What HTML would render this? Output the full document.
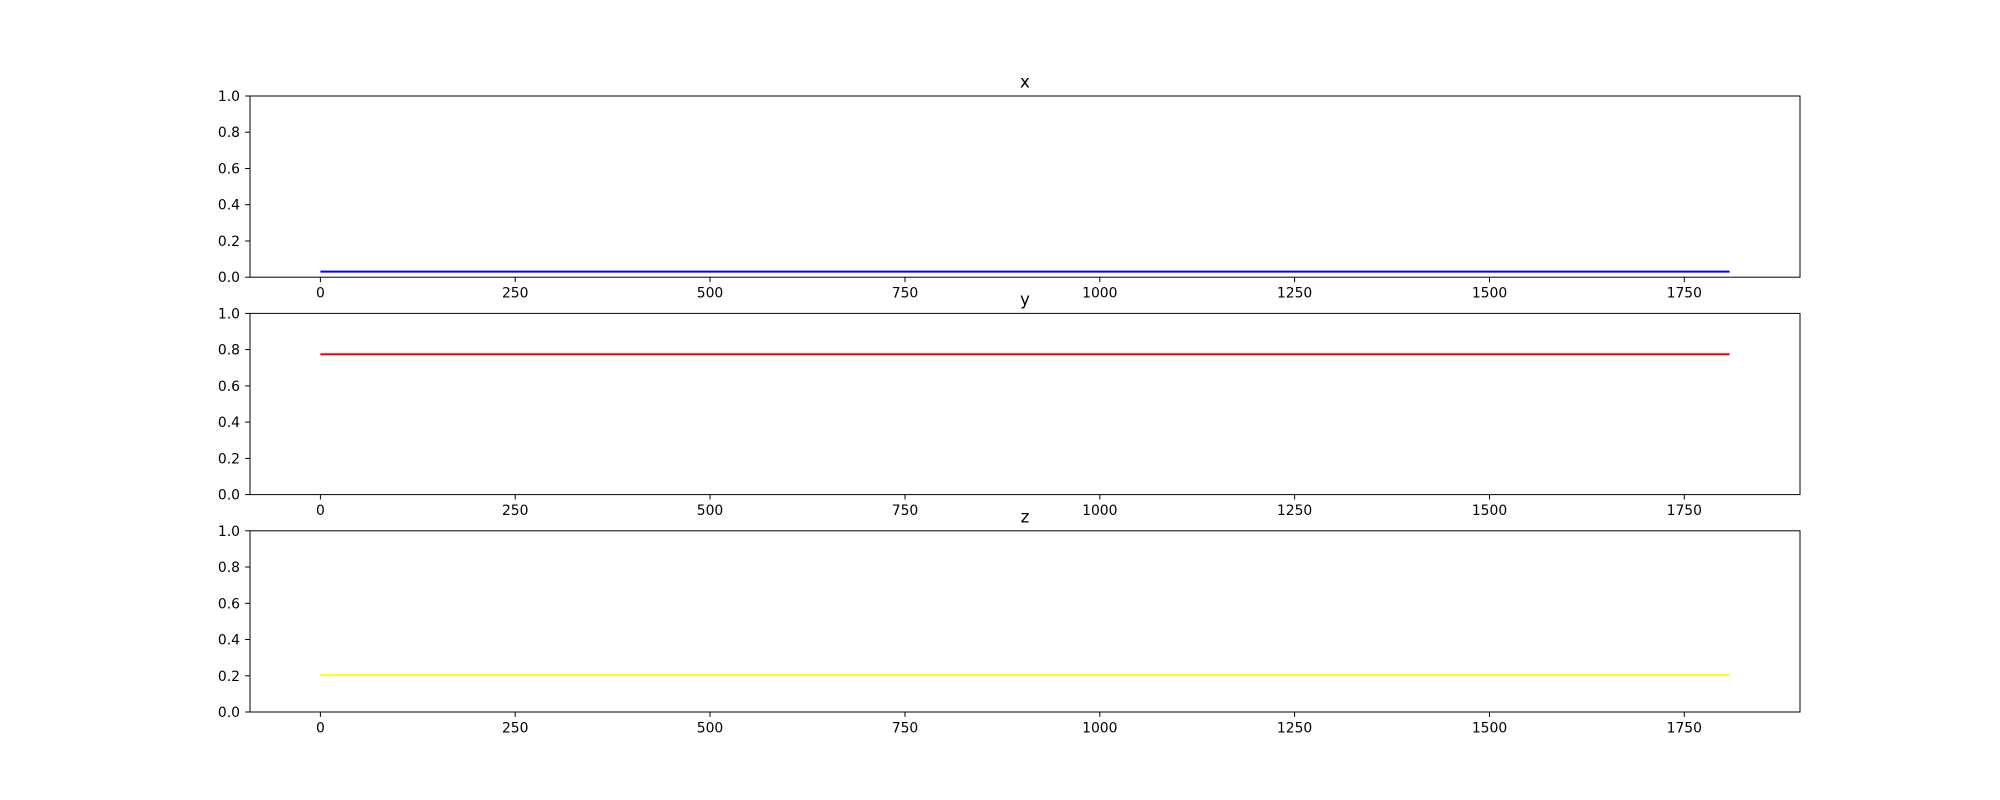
<!DOCTYPE html>
<html><head><style>html,body{margin:0;padding:0;background:#fff}svg{display:block}text{font-family:"DejaVu Sans","Liberation Sans",sans-serif;font-size:13.9px;fill:#000}</style></head>
<body>
<svg width="2000" height="800" xmlns="http://www.w3.org/2000/svg">
<defs>
<g id="xt" stroke="#000" stroke-width="1">
<line x1="320.4" y1="0" x2="320.4" y2="4.9"/><line x1="515.2" y1="0" x2="515.2" y2="4.9"/><line x1="710" y1="0" x2="710" y2="4.9"/><line x1="905" y1="0" x2="905" y2="4.9"/><line x1="1099.8" y1="0" x2="1099.8" y2="4.9"/><line x1="1294.6" y1="0" x2="1294.6" y2="4.9"/><line x1="1489.5" y1="0" x2="1489.5" y2="4.9"/><line x1="1684.3" y1="0" x2="1684.3" y2="4.9"/>
</g>
<g id="yt" stroke="#000" stroke-width="1">
<line x1="245.1" y1="0" x2="250" y2="0"/><line x1="245.1" y1="-36.2" x2="250" y2="-36.2"/><line x1="245.1" y1="-72.5" x2="250" y2="-72.5"/><line x1="245.1" y1="-108.7" x2="250" y2="-108.7"/><line x1="245.1" y1="-145" x2="250" y2="-145"/><line x1="245.1" y1="-181.2" x2="250" y2="-181.2"/>
</g>
</defs>

<!-- Axes 1 -->
<rect x="250" y="96" width="1550" height="181.2" fill="none" stroke="#000" stroke-width="1"/>
<use href="#xt" y="277.2"/><use href="#yt" y="277.2"/>
<text x="1025" y="87.7" text-anchor="middle" style="font-size:16.7px">x</text>
<g text-anchor="end"><text x="240" y="282.2">0.0</text><text x="240" y="246">0.2</text><text x="240" y="209.7">0.4</text><text x="240" y="173.5">0.6</text><text x="240" y="137.2">0.8</text><text x="240" y="101">1.0</text></g>
<g text-anchor="middle"><text x="320.4" y="297.5">0</text><text x="515.2" y="297.5">250</text><text x="710" y="297.5">500</text><text x="905" y="297.5">750</text><text x="1099.8" y="297.5">1000</text><text x="1294.6" y="297.5">1250</text><text x="1489.5" y="297.5">1500</text><text x="1684.3" y="297.5">1750</text></g>
<line x1="320.4" y1="271.6" x2="1729.6" y2="271.6" stroke="#0000ff" stroke-width="2"/>

<!-- Axes 2 -->
<rect x="250" y="313.4" width="1550" height="181.2" fill="none" stroke="#000" stroke-width="1"/>
<use href="#xt" y="494.6"/><use href="#yt" y="494.6"/>
<text x="1025" y="305.1" text-anchor="middle" style="font-size:16.7px">y</text>
<g text-anchor="end"><text x="240" y="499.6">0.0</text><text x="240" y="463.4">0.2</text><text x="240" y="427.1">0.4</text><text x="240" y="390.9">0.6</text><text x="240" y="354.6">0.8</text><text x="240" y="318.4">1.0</text></g>
<g text-anchor="middle"><text x="320.4" y="514.9">0</text><text x="515.2" y="514.9">250</text><text x="710" y="514.9">500</text><text x="905" y="514.9">750</text><text x="1099.8" y="514.9">1000</text><text x="1294.6" y="514.9">1250</text><text x="1489.5" y="514.9">1500</text><text x="1684.3" y="514.9">1750</text></g>
<line x1="320.4" y1="354.2" x2="1729.6" y2="354.2" stroke="#ff0000" stroke-width="2"/>

<!-- Axes 3 -->
<rect x="250" y="530.8" width="1550" height="181.2" fill="none" stroke="#000" stroke-width="1"/>
<use href="#xt" y="712"/><use href="#yt" y="712"/>
<text x="1025" y="522.5" text-anchor="middle" style="font-size:16.7px">z</text>
<g text-anchor="end"><text x="240" y="717">0.0</text><text x="240" y="680.8">0.2</text><text x="240" y="644.5">0.4</text><text x="240" y="608.3">0.6</text><text x="240" y="572">0.8</text><text x="240" y="535.8">1.0</text></g>
<g text-anchor="middle"><text x="320.4" y="732.3">0</text><text x="515.2" y="732.3">250</text><text x="710" y="732.3">500</text><text x="905" y="732.3">750</text><text x="1099.8" y="732.3">1000</text><text x="1294.6" y="732.3">1250</text><text x="1489.5" y="732.3">1500</text><text x="1684.3" y="732.3">1750</text></g>
<line x1="320.4" y1="674.9" x2="1729.6" y2="674.9" stroke="#ffff00" stroke-width="2"/>
</svg>
</body></html>
